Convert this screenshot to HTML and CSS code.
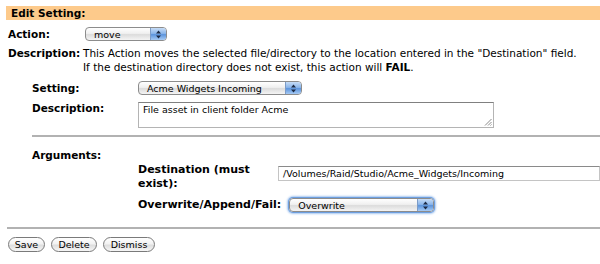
FILE: index.html
```html
<!DOCTYPE html>
<html>
<head>
<meta charset="utf-8">
<link rel="stylesheet" href="styles.css">
</head>
<body>
<div class="panel">
  <div class="title">Edit Setting:</div>
  <div class="row action-row">
    <span class="lbl">Action:</span>
    <span class="sel sel-move">
      <span class="sel-text">move</span>
      <span class="arrows"><svg width="7" height="9" viewBox="0 0 7 9"><path d="M3.5 0.5 L6 3.5 L1 3.5 Z M3.5 8.5 L6 5.5 L1 5.5 Z" fill="#1c2a44"/></svg></span>
    </span>
  </div>
  <div class="row desc-row">
    <span class="lbl">Description:</span>
    <div class="desc-text">This Action moves the selected file/directory to the location entered in the "Destination" field.<br>If the destination directory does not exist, this action will <b>FAIL</b>.</div>
  </div>
  <div class="inner">
    <div class="irow setting-row">
      <span class="ilbl">Setting:</span>
      <span class="sel sel-setting">
        <span class="sel-text">Acme Widgets Incoming</span>
        <span class="arrows"><svg width="7" height="9" viewBox="0 0 7 9"><path d="M3.5 0.5 L6 3.5 L1 3.5 Z M3.5 8.5 L6 5.5 L1 5.5 Z" fill="#1c2a44"/></svg></span>
      </span>
    </div>
    <div class="irow idesc-row">
      <span class="ilbl">Description:</span>
      <div class="textarea">File asset in client folder Acme<span class="grip"><svg width="8" height="8" viewBox="0 0 8 8"><path d="M7.5 1 L1 7.5 M7.5 4 L4 7.5 M7.5 6.5 L6.5 7.5" stroke="#8a8a8a" stroke-width="1"/></svg></span></div>
    </div>
    <div class="rule"></div>
    <div class="args-lbl">Arguments:</div>
    <div class="args">
      <div class="arow dest-row">
        <span class="albl">Destination (must exist):</span>
        <div class="input">/Volumes/Raid/Studio/Acme_Widgets/Incoming</div>
      </div>
      <div class="arow ow-row">
        <span class="albl nowrap">Overwrite/Append/Fail:</span>
        <span class="sel sel-ow">
          <span class="sel-text">Overwrite</span>
          <span class="arrows"><svg width="7" height="9" viewBox="0 0 7 9"><path d="M3.5 0.5 L6 3.5 L1 3.5 Z M3.5 8.5 L6 5.5 L1 5.5 Z" fill="#1c2a44"/></svg></span>
        </span>
      </div>
    </div>
  </div>
  <div class="rule bottom-rule"></div>
  <div class="buttons">
    <span class="btn btn-save">Save</span>
    <span class="btn btn-delete">Delete</span>
    <span class="btn btn-dismiss">Dismiss</span>
  </div>
</div>
</body>
</html>
```
FILE: styles.css
```css
html, body {
  margin: 0;
  padding: 0;
  background: #ffffff;
}
body {
  font-family: "DejaVu Sans", Verdana, sans-serif;
  font-size: 10px;
  color: #000;
}
.panel {
  padding: 6px 0 0 6px;
}
.title {
  background: #fdca8b;
  height: 14px;
  line-height: 14px;
  font-weight: bold;
  font-size: 10.5px;
  padding-left: 5px;
}
.row {
  display: flex;
  padding-left: 2px;
}
.lbl {
  width: 75px;
  flex: none;
  font-weight: bold;
  font-size: 10.5px;
}
.action-row {
  margin-top: 7px;
  height: 14px;
  align-items: center;
}
.action-row .lbl {
  width: 77px;
}
.desc-row {
  margin-top: 5px;
  line-height: 14px;
}
.desc-text {
  font-size: 10.5px;
}
.sel {
  position: relative;
  display: inline-flex;
  align-items: center;
  height: 14px;
  box-sizing: border-box;
  border: 1px solid #8c8c8c;
  border-radius: 4px;
  background: linear-gradient(#ffffff, #f0f0f0 45%, #dcdcdc 55%, #f4f4f4);
  font-size: 9.5px;
  overflow: hidden;
}
.sel-text {
  padding-left: 8px;
  flex: 1;
}
.arrows {
  width: 15px;
  height: 100%;
  display: flex;
  align-items: center;
  justify-content: center;
  background: linear-gradient(#c6dcf6, #8cb6ea 45%, #5c94dc 55%, #a6caf4);
  border-left: 1px solid #7c9cc8;
}
.sel-move { width: 82px; }
.sel-setting { width: 164px; }
.sel-ow {
  width: 145px;
  box-shadow: 0 0 0 1px #6d9fe0, 0 0 2px 2px #a9c8f0;
}
.inner {
  padding-left: 26px;
}
.irow {
  display: flex;
}
.ilbl {
  width: 106px;
  flex: none;
  font-weight: bold;
  font-size: 10.5px;
}
.setting-row {
  margin-top: 7px;
  height: 14px;
  align-items: center;
}
.idesc-row {
  margin-top: 7px;
  align-items: flex-start;
}
.idesc-row .ilbl {
  line-height: 12px;
}
.textarea {
  position: relative;
  width: 356px;
  height: 26px;
  box-sizing: border-box;
  border: 1px solid #b4b4b4;
  border-top-color: #808080;
  padding: 1px 4px;
  font-size: 9.5px;
  line-height: 12px;
}
.grip {
  position: absolute;
  right: 1px;
  bottom: 1px;
  width: 8px;
  height: 8px;
  display: flex;
}
.rule {
  height: 0;
  border-top: 2px solid #b2b2b2;
  margin-top: 7px;
}
.args-lbl {
  font-weight: bold;
  font-size: 10.5px;
  margin-top: 11px;
  line-height: 14px;
}
.args {
  padding-left: 106px;
}
.arow {
  display: flex;
}
.albl {
  font-weight: bold;
  font-size: 11px;
  line-height: 14px;
}
.dest-row {
  margin-top: 1px;
  align-items: flex-start;
}
.dest-row .albl {
  width: 140px;
  flex: none;
}
.input {
  flex: 1;
  height: 15px;
  box-sizing: border-box;
  border: 1px solid #c4c4c4;
  border-top-color: #8a8a8a;
  font-size: 9.5px;
  line-height: 13px;
  padding-left: 4px;
  margin-top: 3px;
}
.ow-row {
  margin-top: 6px;
  align-items: center;
  height: 16px;
}
.nowrap {
  white-space: nowrap;
  margin-right: 8px;
}
.bottom-rule {
  margin-top: 14px;
  margin-left: 1px;
}
.buttons {
  display: flex;
  gap: 6px;
  margin-top: 8px;
  padding-left: 2px;
}
.btn {
  display: inline-flex;
  align-items: center;
  justify-content: center;
  height: 15px;
  box-sizing: border-box;
  border: 1px solid #7a7a7a;
  border-radius: 8px;
  background: linear-gradient(#ffffff, #f2f2f2 45%, #dedede 55%, #f6f6f6);
  font-size: 9.5px;
}
.btn-save { width: 37px; }
.btn-delete { width: 46px; }
.btn-dismiss { width: 52px; }
```
